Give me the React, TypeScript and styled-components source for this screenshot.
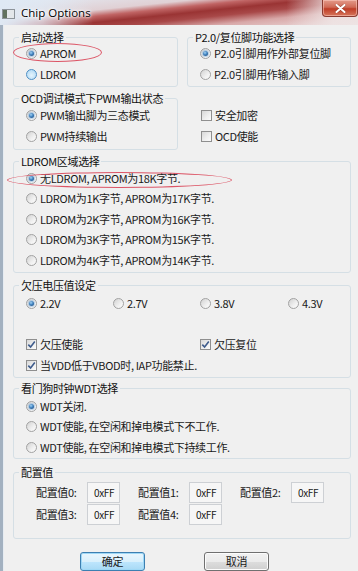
import React from "react";
import styled, { createGlobalStyle } from "styled-components";

const Global = createGlobalStyle`
  html, body { margin: 0; padding: 0; background: #f0f0f0; }
  body {
    font-family: "Noto Sans CJK SC", "Liberation Sans", sans-serif;
    font-size: 11px;
    line-height: 13px;
    letter-spacing: -0.35px;
    color: #1a1a1a;
  }
`;

const Win = styled.div`
  position: relative;
  width: 358px;
  height: 571px;
  overflow: hidden;
  background: #f0f0f0;
  display: flex;
  flex-direction: column;
`;

const TitleBar = styled.div`
  height: 25px;
  flex: none;
  display: flex;
  align-items: center;
  background:
    linear-gradient(90deg, rgba(223,233,244,1) 0%, rgba(223,233,244,0.7) 12%, rgba(223,233,244,0) 26%, rgba(238,226,226,0) 80%, rgba(238,228,228,0.9) 93%),
    linear-gradient(174deg, #e4ecf5 0%, #e0d0d4 32%, #c06464 42%, #9a3434 52%, #a84848 62%, #d8a8a8 76%, #eedfdf 100%);
`;

const AppIcon = styled.svg`
  margin: 2px 6px 0 2px;
  flex: none;
`;

const Title = styled.span`
  font-family: "Open Sans", "Liberation Sans", sans-serif;
  font-size: 11.5px;
  line-height: 16px;
  letter-spacing: 0;
  color: #000;
  text-shadow: 0 0 6px #fff, 0 0 3px #fff, 0 0 2px #fff;
`;

const CloseBtn = styled.div`
  margin-left: auto;
  align-self: flex-start;
  width: 36px;
  height: 17px;
  box-sizing: border-box;
  border: 1px solid #8a3a30;
  border-top: none;
  border-radius: 0 0 4px 4px;
  background: linear-gradient(#e39a8a 0%, #d06a56 45%, #bf3c26 55%, #d6765c 100%);
  box-shadow: inset 0 0 0 1px rgba(255, 210, 200, 0.5);
  display: grid;
  place-items: center;
`;

const Body = styled.div`
  flex: 1;
  display: flex;
  flex-direction: column;
  border-left: 3px solid #a3b1c0;
  box-shadow: inset 1px 0 #e6ecf2;
  padding: 0 7px 0 10px;
`;

const Line = styled.div<{ $mt: number }>`
  display: flex;
  margin-top: ${(p) => p.$mt}px;
`;

const Group = styled.fieldset<{ $w?: number; $mt?: number; $ml?: number }>`
  margin: ${(p) => p.$mt ?? 0}px 0 0 ${(p) => p.$ml ?? 0}px;
  padding: 0;
  min-width: 0;
  box-sizing: border-box;
  border: 1px solid #d5dfe5;
  border-radius: 3px;
  ${(p) => (p.$w ? `width: ${p.$w}px; flex: none;` : `flex: 1;`)}
`;

const Legend = styled.legend`
  margin-left: 5px;
  padding: 0 2px;
  line-height: 12px;
  color: #111;
`;

const Inner = styled.div<{ $pt: number; $pb: number; $pl?: number }>`
  padding: ${(p) => p.$pt}px 0 ${(p) => p.$pb}px ${(p) => p.$pl ?? 12}px;
`;

const Row = styled.div<{ $h: number }>`
  height: ${(p) => p.$h}px;
  display: flex;
  align-items: center;
  white-space: nowrap;
`;

const Spacer = styled.div<{ $h: number }>`
  height: ${(p) => p.$h}px;
`;

const Cols = styled.div<{ $cols: string; $h: number }>`
  height: ${(p) => p.$h}px;
  display: grid;
  grid-template-columns: ${(p) => p.$cols};
  align-items: center;
`;

const Item = styled.div`
  display: flex;
  align-items: center;
  white-space: nowrap;
`;

const Radio = styled.span<{ $on?: boolean; $hot?: boolean }>`
  flex: none;
  width: 11px;
  height: 11px;
  box-sizing: border-box;
  border-radius: 50%;
  margin-right: 3px;
  display: inline-grid;
  place-items: center;
  border: 1px solid ${(p) => (p.$hot ? "#4f8fc4" : "#a2a2a2")};
  background: ${(p) =>
    p.$hot
      ? "radial-gradient(circle at 50% 60%, #e4f4fd 0%, #a9d5f3 100%)"
      : "linear-gradient(135deg, #d2d2d2 0%, #f0f0f0 60%, #fdfdfd 100%)"};
  &::after {
    content: "";
    display: ${(p) => (p.$on ? "block" : "none")};
    width: 5px;
    height: 5px;
    border-radius: 50%;
    background: radial-gradient(circle at 40% 35%, #a6d4f4 0%, #3f82c0 45%, #173f6e 100%);
    box-shadow: 0 0 1px 1px rgba(120, 170, 215, 0.5);
  }
`;

const Check = styled.span`
  flex: none;
  width: 11px;
  height: 11px;
  box-sizing: border-box;
  margin-right: 3px;
  border: 1px solid #8f8f8f;
  background: linear-gradient(135deg, #d8d8d8 0%, #f0f0f0 60%, #fbfbfb 100%);
  display: inline-grid;
  place-items: center;
`;

const SideChecks = styled.div`
  margin-left: 23px;
  padding-top: 13px;
`;

const CfgGrid = styled.div`
  display: grid;
  grid-template-columns: repeat(3, 102px);
  row-gap: 1px;
`;

const CfgCell = styled.div`
  display: flex;
  align-items: center;
  height: 21px;
`;

const CfgLabel = styled.span`
  width: 51px;
  flex: none;
`;

const Edit = styled.div`
  width: 33px;
  height: 21px;
  box-sizing: border-box;
  border: 1px solid #cdd0d4;
  background: #f6f6f6;
  padding-left: 6px;
  line-height: 19px;
  font-size: 10px;
`;

const Buttons = styled.div`
  display: flex;
  gap: 59px;
  margin-top: 13px;
  padding-left: 67px;
`;

const Btn = styled.div<{ $def?: boolean }>`
  width: 65px;
  height: 19px;
  box-sizing: border-box;
  border-radius: 3px;
  display: grid;
  place-items: center;
  border: 1px solid ${(p) => (p.$def ? "#3c7fb1" : "#707070")};
  background: ${(p) =>
    p.$def
      ? "linear-gradient(#eaf6fd 0%, #d9f0fc 50%, #bee6fd 51%, #a7d9f5 100%)"
      : "linear-gradient(#f2f2f2 0%, #ebebeb 50%, #dddddd 51%, #cfcfcf 100%)"};
  box-shadow: inset 0 0 0 1px ${(p) => (p.$def ? "#9fd8f6" : "#fcfcfc")};
`;

const Mark = styled.div<{ $x: number; $y: number; $w: number; $h: number }>`
  position: absolute;
  left: ${(p) => p.$x}px;
  top: ${(p) => p.$y}px;
  width: ${(p) => p.$w}px;
  height: ${(p) => p.$h}px;
  box-sizing: border-box;
  border: 1px solid #dc5566;
  border-radius: 50%;
  pointer-events: none;
`;

const Tick = () => (
  <svg width="9" height="9" viewBox="0 0 9 9">
    <path d="M1.3 4.6 L3.6 7 L7.8 1.6" fill="none" stroke="#3f5c8c" strokeWidth="1.6" />
  </svg>
);

const RadioItem = ({ on, hot, children }: { on?: boolean; hot?: boolean; children: React.ReactNode }) => (
  <Item>
    <Radio $on={on} $hot={hot} />
    {children}
  </Item>
);

const CheckItem = ({ on, children }: { on?: boolean; children: React.ReactNode }) => (
  <Item>
    <Check>{on && <Tick />}</Check>
    {children}
  </Item>
);

const ldrom = [
  "LDROM为1K字节, APROM为17K字节.",
  "LDROM为2K字节, APROM为16K字节.",
  "LDROM为3K字节, APROM为15K字节.",
  "LDROM为4K字节, APROM为14K字节.",
];

const cfg = ["配置值0:", "配置值1:", "配置值2:", "配置值3:", "配置值4:"];

export default function App() {
  return (
    <>
      <Global />
      <Win>
        <TitleBar>
          <AppIcon width="13" height="10" viewBox="0 0 13 10">
            <rect x="0.5" y="0.5" width="12" height="9" fill="#e3e7ea" stroke="#8d949a" />
            <rect x="1" y="1" width="4" height="8" fill="#61725f" />
          </AppIcon>
          <Title>Chip Options</Title>
          <CloseBtn>
            <svg width="11" height="9" viewBox="0 0 11 9">
              <path d="M1.5 1 L9.5 8 M9.5 1 L1.5 8" stroke="#5a1a10" strokeWidth="3.2" strokeLinecap="round" opacity="0.35" />
              <path d="M1.5 1 L9.5 8 M9.5 1 L1.5 8" stroke="#fff" strokeWidth="2" strokeLinecap="round" />
            </svg>
          </CloseBtn>
        </TitleBar>

        <Body>
          <Line $mt={6}>
            <Group $w={165}>
              <Legend>启动选择</Legend>
              <Inner $pt={0} $pb={1}>
                <Row $h={21}><RadioItem on>APROM</RadioItem></Row>
                <Row $h={21}><RadioItem hot>LDROM</RadioItem></Row>
              </Inner>
            </Group>
            <Group $ml={9}>
              <Legend>P2.0/复位脚功能选择</Legend>
              <Inner $pt={0} $pb={1}>
                <Row $h={21}><RadioItem on>P2.0引脚用作外部复位脚</RadioItem></Row>
                <Row $h={21}><RadioItem>P2.0引脚用作输入脚</RadioItem></Row>
              </Inner>
            </Group>
          </Line>

          <Line $mt={5}>
            <Group $w={165}>
              <Legend>OCD调试模式下PWM输出状态</Legend>
              <Inner $pt={1} $pb={2}>
                <Row $h={21}><RadioItem on>PWM输出脚为三态模式</RadioItem></Row>
                <Row $h={21}><RadioItem>PWM持续输出</RadioItem></Row>
              </Inner>
            </Group>
            <SideChecks>
              <Row $h={21}><CheckItem>安全加密</CheckItem></Row>
              <Row $h={21}><CheckItem>OCD使能</CheckItem></Row>
            </SideChecks>
          </Line>

          <Group $mt={5}>
            <Legend>LDROM区域选择</Legend>
            <Inner $pt={1} $pb={1}>
              <Row $h={20.5}><RadioItem on>无LDROM, APROM为18K字节.</RadioItem></Row>
              {ldrom.map((t) => (
                <Row key={t} $h={20.5}><RadioItem>{t}</RadioItem></Row>
              ))}
            </Inner>
          </Group>

          <Group $mt={6.5}>
            <Legend>欠压电压值设定</Legend>
            <Inner $pt={2} $pb={1}>
              <Cols $cols="87px 87px 88px 1fr" $h={21}>
                <RadioItem on>2.2V</RadioItem>
                <RadioItem>2.7V</RadioItem>
                <RadioItem>3.8V</RadioItem>
                <RadioItem>4.3V</RadioItem>
              </Cols>
              <Spacer $h={20} />
              <Cols $cols="174px 1fr" $h={21}>
                <CheckItem on>欠压使能</CheckItem>
                <CheckItem on>欠压复位</CheckItem>
              </Cols>
              <Row $h={21}><CheckItem on>当VDD低于VBOD时, IAP功能禁止.</CheckItem></Row>
            </Inner>
          </Group>

          <Group $mt={4}>
            <Legend>看门狗时钟WDT选择</Legend>
            <Inner $pt={2} $pb={0}>
              <Row $h={20.5}><RadioItem on>WDT关闭.</RadioItem></Row>
              <Row $h={20.5}><RadioItem>WDT使能, 在空闲和掉电模式下不工作.</RadioItem></Row>
              <Row $h={20.5}><RadioItem>WDT使能, 在空闲和掉电模式下持续工作.</RadioItem></Row>
            </Inner>
          </Group>

          <Group $mt={7.5}>
            <Legend>配置值</Legend>
            <Inner $pt={4} $pb={5} $pl={22}>
              <CfgGrid>
                {cfg.map((c) => (
                  <CfgCell key={c}>
                    <CfgLabel>{c}</CfgLabel>
                    <Edit>0xFF</Edit>
                  </CfgCell>
                ))}
              </CfgGrid>
            </Inner>
          </Group>

          <Buttons>
            <Btn $def>确定</Btn>
            <Btn>取消</Btn>
          </Buttons>
        </Body>

        <Mark $x={13} $y={43} $w={89} $h={19} />
        <Mark $x={7} $y={172} $w={225} $h={16} />
      </Win>
    </>
  );
}
